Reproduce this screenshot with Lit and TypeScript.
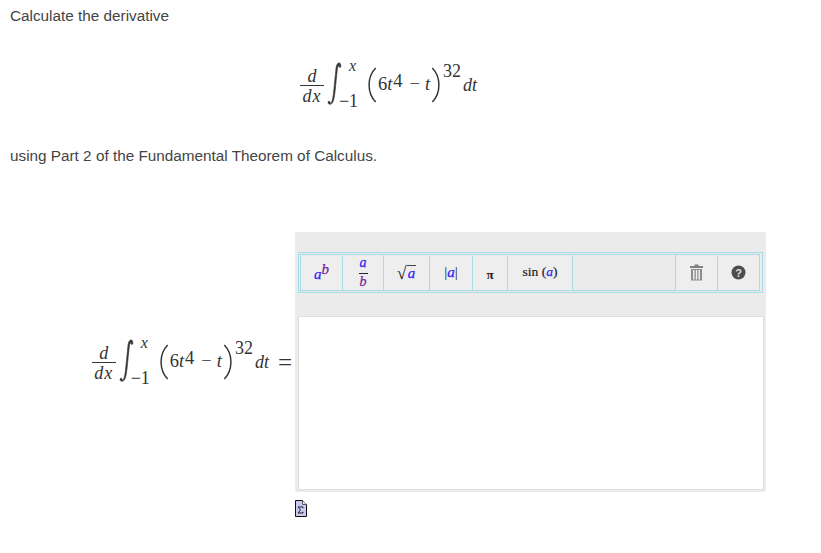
import { LitElement, html, css, svg } from 'lit';
import { customElement } from 'lit/decorators.js';

const integralSign = svg`<path d="M16.600 2.200c-.5-1.200-1.900-1.600-2.900-.7-1.300 1.100-1.700 3.200-2 5.200-.9 7-1.200 14-2.100 21-.5 5-1 11-2.300 15-.3 1-.8 2.300-1.800 2.500-.4 0-.6-.2-.5-.4.6-.5.6-1.500-.1-1.900-.9-.5-1.900.2-1.900 1.200.1 1.300 1.400 2 2.600 1.800 1.600-.3 2.500-1.900 3-3.300 1.300-3.500 1.700-8 2.200-12 .9-7.500 1.300-15 2.300-22.500.2-1.300.5-3.100 1.300-4 .4-.4.9-.4 1-.1-.5.4-.6 1.300 0 1.700.8.5 1.700-.1 1.500-1.100z" fill="#333" stroke="#333" stroke-width=".7"/>`;

@customElement('int-expr')
export class IntExpr extends LitElement {
  static styles = css`
    :host {
      display: inline-block;
      font-family: 'Liberation Serif', 'DejaVu Serif', serif;
      font-size: 18.5px;
      line-height: 1;
      color: #333;
      white-space: nowrap;
    }
    .row {
      display: inline-flex;
      align-items: center;
      height: 56px;
    }
    .frac {
      display: flex;
      flex-direction: column;
      align-items: center;
      width: 24px;
      margin-right: 1px;
      font-style: italic;
      font-size: 18px;
    }
    .frac .num {
      height: 18px;
      border-bottom: 1px solid #333;
      align-self: stretch;
      text-align: center;
    }
    .frac .den {
      height: 17px;
      padding-top: 1px;
      letter-spacing: 1px;
    }
    .int {
      width: 18px;
      height: 46px;
      flex: none;
    }
    .limits {
      display: flex;
      flex-direction: column;
      justify-content: space-between;
      height: 46px;
      width: 17px;
      margin-left: 3px;
      margin-right: 4px;
    }
    .limits .up {
      font-style: italic;
      font-size: 16px;
      padding-left: 3px;
      margin-top: -4px;
    }
    .limits .low {
      font-size: 18px;
      margin-left: -7px;
      margin-bottom: -2px;
    }
    .paren {
      width: 10px;
      height: 36px;
      flex: none;
    }
    .body {
      margin: -1px 1px 0 1px;
      display: inline-flex;
      align-items: flex-start;
    }
    .body i {
      font-style: italic;
    }
    .pow {
      margin-top: -3px;
      margin-left: 1px;
    }
    .minus {
      margin: 0 5px 0 7px;
    }
    .outer {
      margin-top: -28px;
      margin-left: 2px;
      font-size: 18px;
    }
    .dt {
      margin-top: -1px;
      margin-left: 2px;
      font-style: italic;
      font-size: 18px;
    }
  `;

  render() {
    return html`
      <span class="row">
        <span class="frac"><span class="num">d</span><span class="den">dx</span></span>
        <svg class="int" viewBox="0 0 19 50">${integralSign}</svg>
        <span class="limits"><span class="up">x</span><span class="low">−1</span></span>
        <svg class="paren" viewBox="0 0 10 37">
          <path d="M8.800 1C3.800 6 2 12 2 18.500S3.800 31 8.800 36" fill="none" stroke="#333" stroke-width="1.500"/>
        </svg>
        <span class="body">6<i>t</i><span class="pow">4</span><span class="minus">−</span><i>t</i></span>
        <svg class="paren" viewBox="0 0 10 37">
          <path d="M1.200 1C6.200 6 8 12 8 18.500S6.200 31 1.200 36" fill="none" stroke="#333" stroke-width="1.500"/>
        </svg>
        <span class="outer">32</span>
        <span class="dt">dt</span>
      </span>
    `;
  }
}

@customElement('math-toolbar')
export class MathToolbar extends LitElement {
  static styles = css`
    :host {
      display: block;
      border: 1px solid #a8dbe8;
      padding: 1px 2px 1px 1px;
    }
    .bar {
      display: flex;
      height: 35px;
      border: 1px solid #a8dbe8;
      font-family: 'Liberation Serif', 'DejaVu Serif', serif;
      color: #222;
    }
    .cell {
      display: flex;
      align-items: center;
      justify-content: center;
      flex: none;
      box-sizing: border-box;
      border-right: 1px solid #a8dbe8;
      border-radius: 3px 3px 0 0;
      background: #eeeeee;
      font-size: 14px;
    }
    .spacer {
      flex: 1;
      border-right: 1px solid #a8dbe8;
      background: #ebebeb;
    }
    .last {
      border-right: 0;
    }
    .a {
      color: #3322ee;
      font-style: italic;
      -webkit-text-stroke: 0.25px #3322ee;
    }
    .b {
      color: #772299;
      font-style: italic;
      -webkit-text-stroke: 0.25px #772299;
    }
    .pw {
      font-size: 15px;
      padding-top: 3px;
    }
    .pw .b {
      margin-top: -9px;
    }
    .fr {
      flex-direction: column;
      font-size: 14px;
      line-height: 1;
    }
    .fr .a {
      padding-bottom: 3px;
      border-bottom: 1px solid #222;
      margin-bottom: 1px;
      width: 9px;
      text-align: center;
      -webkit-text-stroke: 0.25px #3322ee;
    }
    .rad {
      border-top: 1px solid #444;
      line-height: 14px;
      padding: 0 1px;
      font-size: 15px;
    }
    .sq {
      font-size: 18px;
      line-height: 1;
    }
    .abs {
      font-size: 15px;
    }
    .pi {
      padding-top: 4px;
      font-size: 13px;
      font-weight: 700;
    }
    .fn {
      font-size: 13.5px;
      white-space: nowrap;
      padding-bottom: 2px;
      -webkit-text-stroke: 0.2px #222;
    }
  `;

  render() {
    return html`
      <div class="bar">
        <div class="cell pw" style="width:42px"><span class="a">a</span><span class="b">b</span></div>
        <div class="cell fr" style="width:41px"><span class="a">a</span><span class="b">b</span></div>
        <div class="cell" style="width:46px"><span class="sq">√</span><span class="a rad">a</span></div>
        <div class="cell abs" style="width:43px"><span>|</span><span class="a">a</span><span>|</span></div>
        <div class="cell pi" style="width:35px">π</div>
        <div class="cell fn" style="width:65px">sin&nbsp;(<span class="a">a</span>)</div>
        <div class="spacer"></div>
        <div class="cell" style="width:42px">
          <svg width="13" height="17" viewBox="0 0 13 17">
            <path d="M4.500 .5h4v1.500H13v2H0V2h4.500z" fill="#808080"/>
            <path d="M1 5h11v11.500H1zM3 6v9.500h1.500V6zM5.800 6v9.500h1.500V6zM8.500 6v9.500H10V6z" fill="#8c8c8c" fill-rule="evenodd"/>
          </svg>
        </div>
        <div class="cell last" style="width:41px">
          <svg width="15" height="15" viewBox="0 0 15 15">
            <circle cx="7.500" cy="7.500" r="7" fill="#4d4d4d"/>
            <text x="7.500" y="11.500" text-anchor="middle" fill="#ddd" font-family="Liberation Sans" font-weight="700" font-size="11">?</text>
          </svg>
        </div>
      </div>
    `;
  }
}

@customElement('app-root')
export class AppRoot extends LitElement {
  static styles = css`
    :host {
      display: block;
      width: 821px;
      height: 553px;
      background: #fff;
      font-family: 'Liberation Sans', Arial, sans-serif;
      font-size: 15.3px;
      color: #444;
      overflow: hidden;
    }
    .prompt {
      margin: 0;
      padding: 7px 0 0 10px;
      line-height: 17px;
    }
    .center {
      display: flex;
      justify-content: center;
      width: 777px;
      margin-top: 33px;
    }
    .after {
      margin: 0;
      padding: 34px 0 0 10px;
      line-height: 17px;
    }
    .answer {
      display: grid;
      grid-template-columns: 295px 471px;
      margin-top: 68px;
    }
    .lhs {
      display: flex;
      align-items: center;
      justify-content: flex-end;
      padding: 0 3px 0 0;
    }
    .eq {
      font-family: 'Liberation Serif', serif;
      font-size: 25px;
      line-height: 1;
      margin-left: 9px;
      color: #333;
    }
    .panel {
      background: #ebebeb;
      border-radius: 2px;
      height: 260px;
      padding: 20px 3px 2px 3px;
      box-sizing: border-box;
      display: flex;
      flex-direction: column;
      gap: 23px;
    }
    .input {
      flex: 1;
      background: #fff;
      border: 1px solid #dedede;
      margin-right: -1px;
    }
    .doc {
      display: block;
      margin: 8px 0 0 295px;
    }
  `;

  render() {
    return html`
      <p class="prompt">Calculate the derivative</p>
      <div class="center"><int-expr></int-expr></div>
      <p class="after">using Part 2 of the Fundamental Theorem of Calculus.</p>
      <div class="answer">
        <div class="lhs"><int-expr></int-expr><span class="eq">=</span></div>
        <div class="panel">
          <math-toolbar></math-toolbar>
          <div class="input"></div>
        </div>
      </div>
      <svg class="doc" width="12" height="17" viewBox="0 0 12 17">
        <path d="M.5.5h7l4 4v12H.5z" fill="#c8c8f0" stroke="#111"/>
        <path d="M7.500.5v4h4" fill="#eee" stroke="#555"/>
        <path d="M3 7h5v1.200M3 7l2.500 3L3 13h5v-1.200" fill="none" stroke="#222"/>
      </svg>
    `;
  }
}
